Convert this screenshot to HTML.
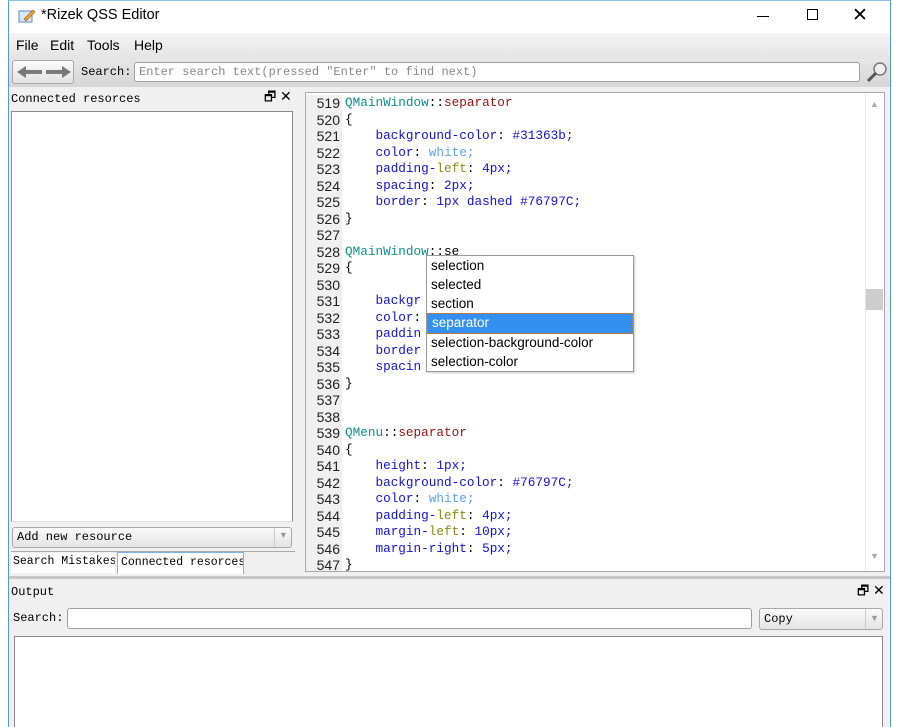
<!DOCTYPE html>
<html><head><meta charset="utf-8"><style>
*{margin:0;padding:0;box-sizing:border-box}
body{width:899px;height:727px;background:#fff;position:relative;overflow:hidden;font-family:"Liberation Sans",sans-serif}
.a{position:absolute;white-space:nowrap}
.mono{font-family:"Liberation Mono",monospace;font-size:12.7px}
.code{left:345px;top:95px;white-space:pre;line-height:16.5px}
.ln{left:306px;top:95px;width:36px;background:#f0f0f0;height:476px;text-align:right;font-size:14px;line-height:16.5px;color:#222;padding-right:2px}
.k{color:#1010e0}.t{color:#0a8f8f}.r{color:#9a1010}.w{color:#5aa0ff}.o{color:#8a8a10}
.btn{border:1px solid #a8a8a8;border-radius:3px;background:linear-gradient(#fafafa,#e4e4e4)}
</style></head><body>
<div class="a" style="left:8px;top:0;width:883px;height:727px;border-left:1px solid #4a9be0;border-right:1px solid #4a9be0;border-top:1px solid #8ec0ef;background:#f0f0f0"></div>
<div class="a" style="left:9px;top:1px;width:881px;height:32px;background:#fff"></div>
<svg class="a" style="left:18px;top:8px" width="18" height="16"><rect x="1" y="3" width="13" height="11" fill="#d8e8f8" stroke="#5b88c0"/><path d="M6 11 L15 2 L17 4 L8 13 Z" fill="#f0a030" stroke="#a06010" stroke-width=".6"/></svg>
<div class="a" style="left:41px;top:7px;font-size:14.5px;color:#000">*Rizek QSS Editor</div>
<div class="a" style="left:757px;top:16px;width:12px;height:1px;background:#000"></div>
<div class="a" style="left:807px;top:9px;width:11px;height:11px;border:1px solid #000"></div>
<div class="a" style="left:852px;top:4px;font-size:19px;color:#000">✕</div>
<div class="a" style="left:9px;top:33px;width:881px;height:26px;background:linear-gradient(#f4f4f4,#e4e4e4)"></div>
<div class="a" style="left:16px;top:37px;font-size:14px">File</div>
<div class="a" style="left:50px;top:37px;font-size:14px">Edit</div>
<div class="a" style="left:87px;top:37px;font-size:14px">Tools</div>
<div class="a" style="left:134px;top:37px;font-size:14px">Help</div>
<div class="a" style="left:9px;top:59px;width:881px;height:28px;background:linear-gradient(#e6e6e6,#d6d6d6)"></div>
<div class="a btn" style="left:12px;top:60px;width:62px;height:24px"></div>
<svg class="a" style="left:15px;top:64px" width="58" height="16"><path d="M2 8 L11 2 L11 6 L27 6 L27 10 L11 10 L11 14 Z M56 8 L47 2 L47 6 L31 6 L31 10 L47 10 L47 14 Z" fill="#7a7a7a"/></svg>
<div class="a mono" style="left:81px;top:65px;font-size:12px">Search:</div>
<div class="a mono" style="left:134px;top:62px;width:726px;height:20px;background:#fff;border:1px solid #a0a0a0;border-radius:3px;color:#888;font-size:12px;padding:2px 4px">Enter search text(pressed "Enter" to find next)</div>
<svg class="a" style="left:864px;top:60px" width="26" height="24"><circle cx="16" cy="9" r="6" fill="#eee" stroke="#777" stroke-width="1.5"/><path d="M12 13 L4 21" stroke="#555" stroke-width="3"/></svg>
<div class="a mono" style="left:11px;top:92px;font-size:12px">Connected resorces</div>
<div class="a" style="left:264px;top:88px;font-size:13px">🗗</div>
<div class="a" style="left:280px;top:88px;font-size:14px">✕</div>
<div class="a" style="left:11px;top:111px;width:282px;height:411px;background:#fff;border:1px solid #8a8a8a;border-bottom-color:#ddd"></div>
<div class="a btn mono" style="left:12px;top:527px;width:280px;height:21px;font-size:12px;padding:2px 4px">Add new resource</div>
<div class="a" style="left:274px;top:528px;width:1px;height:19px;background:#ccc"></div>
<div class="a" style="left:279px;top:530px;font-size:9px;color:#999">▼</div>
<div class="a" style="left:11px;top:551px;width:284px;height:1px;background:#aaa"></div>
<div class="a mono" style="left:11px;top:553px;width:104px;height:20px;background:#fff;font-size:11.5px;padding:2px 2px;overflow:hidden">Search Mistakes</div>
<div class="a mono" style="left:117px;top:552px;width:127px;height:22px;background:#fff;border:1px solid #7ab4ea;border-bottom:none;font-size:11.5px;padding:3px 3px;overflow:hidden">Connected resorces</div>
<div class="a" style="left:305px;top:92px;width:580px;height:480px;background:#fff;border:1px solid #aaa"></div>
<div class="a ln">519<br>520<br>521<br>522<br>523<br>524<br>525<br>526<br>527<br>528<br>529<br>530<br>531<br>532<br>533<br>534<br>535<br>536<br>537<br>538<br>539<br>540<br>541<br>542<br>543<br>544<br>545<br>546<br>547</div>
<div class="a mono code"><span class="t">QMainWindow</span>::<span class="r">separator</span>
{
    <span class="k">background-color</span>: <span class="k">#31363b;</span>
    <span class="k">color</span>: <span class="w">white;</span>
    <span class="k">padding-</span><span class="o">left</span>: <span class="k">4px;</span>
    <span class="k">spacing</span>: <span class="k">2px;</span>
    <span class="k">border</span>: <span class="k">1px dashed #76797C;</span>
}

<span class="t">QMainWindow</span>::se
{

    <span class="k">backgr</span>
    <span class="k">color</span>:
    <span class="k">paddin</span>
    <span class="k">border</span>
    <span class="k">spacin</span>
}


<span class="t">QMenu</span>::<span class="r">separator</span>
{
    <span class="k">height</span>: <span class="k">1px;</span>
    <span class="k">background-color</span>: <span class="k">#76797C;</span>
    <span class="k">color</span>: <span class="w">white;</span>
    <span class="k">padding-</span><span class="o">left</span>: <span class="k">4px;</span>
    <span class="k">margin-</span><span class="o">left</span>: <span class="k">10px;</span>
    <span class="k">margin-right</span>: <span class="k">5px;</span>
}</div>
<div class="a" style="left:865px;top:93px;width:19px;height:478px;background:#fff;border-left:1px solid #e4e4e4"></div>
<div class="a" style="left:870px;top:99px;font-size:9px;color:#aaa">▲</div>
<div class="a" style="left:866px;top:289px;width:17px;height:21px;background:#cdcdcd"></div>
<div class="a" style="left:870px;top:551px;font-size:9px;color:#aaa">▼</div>
<div class="a" style="left:426px;top:255px;width:208px;height:117px;background:#fff;border:1px solid #999;box-shadow:1px 1px 2px #ccc;font-size:13.5px;line-height:18.8px;padding-top:1px">
<div style="padding-left:4px">selection</div>
<div style="padding-left:4px">selected</div>
<div style="padding-left:4px">section</div>
<div style="padding-left:4px;background:#3390f0;color:#fff;border:1px dotted #c08040">separator</div>
<div style="padding-left:4px">selection-background-color</div>
<div style="padding-left:4px">selection-color</div>
</div>
<div class="a" style="left:9px;top:576px;width:881px;height:3px;background:#c8c8c8"></div>
<div class="a mono" style="left:11px;top:585px;font-size:12px">Output</div>
<div class="a" style="left:857px;top:582px;font-size:13px">🗗</div>
<div class="a" style="left:873px;top:582px;font-size:14px">✕</div>
<div class="a mono" style="left:13px;top:611px;font-size:12px">Search:</div>
<div class="a" style="left:67px;top:608px;width:685px;height:21px;background:#fff;border:1px solid #a0a0a0;border-radius:3px"></div>
<div class="a btn mono" style="left:759px;top:608px;width:124px;height:22px;font-size:12px;padding:3px 4px">Copy</div>
<div class="a" style="left:865px;top:609px;width:1px;height:20px;background:#ccc"></div>
<div class="a" style="left:870px;top:613px;font-size:9px;color:#999">▼</div>
<div class="a" style="left:14px;top:636px;width:869px;height:91px;background:#fff;border:1px solid #888;border-bottom:none"></div>
</body></html>
